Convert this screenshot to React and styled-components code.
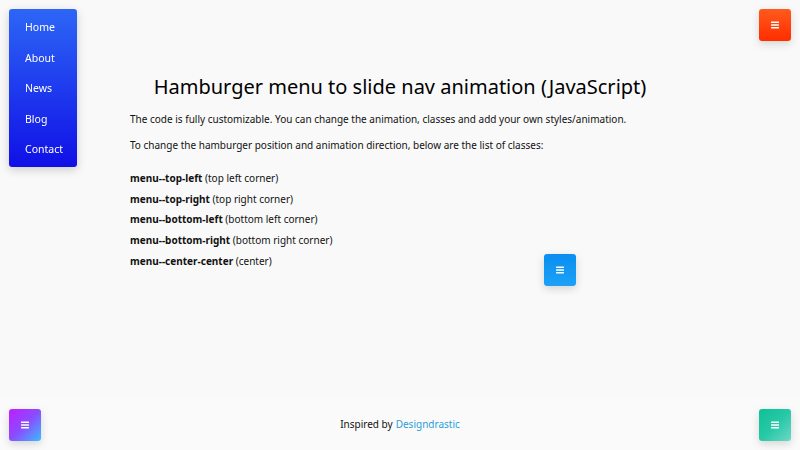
import React from "react"
import styled, { createGlobalStyle, css } from "styled-components"

const GlobalStyle = createGlobalStyle`
  html, body {
    margin: 0;
    padding: 0;
    background: #f9f9f9;
    font-family: "Noto Sans", "Open Sans", sans-serif;
    color: #111;
  }
  * { box-sizing: border-box; }
`

const Page = styled.div`
  min-height: 100vh;
  display: flex;
  flex-direction: column;
`

const Main = styled.main`
  flex: 1;
  width: 540px;
  margin: 0 auto;
  padding-top: 72px;
`

const Title = styled.h1`
  margin: 0 0 9px;
  font-size: 20px;
  font-weight: 400;
  line-height: 30px;
  text-align: center;
  color: #000;
`

const Text = styled.p`
  margin: 0 0 10px;
  font-size: 10px;
  line-height: 16px;
`

const ClassList = styled.ul`
  list-style: none;
  margin: 15px 0 0;
  padding: 0;
  font-size: 10px;
  line-height: 20.7px;

  b {
    font-weight: 700;
  }
`

const Footer = styled.footer`
  height: 52px;
  display: flex;
  align-items: center;
  justify-content: center;
  font-size: 10px;
  background: #fafafa;

  a {
    color: #2a9fd8;
    text-decoration: none;
    margin-left: 3px;
  }
`

const NavPanel = styled.nav`
  position: fixed;
  top: 9px;
  left: 9px;
  width: 68px;
  height: 158px;
  border-radius: 3px;
  background: linear-gradient(180deg, #2d66f6 0%, #1010e6 100%);
  box-shadow: 0 3px 10px rgba(0, 0, 0, 0.18);
  display: flex;
  flex-direction: column;
  justify-content: space-between;
  padding: 9px 0 9px 16px;
`

const NavLink = styled.a`
  color: #fff;
  font-size: 10.5px;
  line-height: 18px;
  text-decoration: none;
`

const gradients = {
  orange: "linear-gradient(180deg, #ff5a1e 0%, #ff2d00 100%)",
  blue: "linear-gradient(180deg, #0b8ef0 0%, #1ba2f6 100%)",
  purple: "linear-gradient(135deg, #c21dff 0%, #8a4cff 50%, #3bbcff 100%)",
  teal: "linear-gradient(135deg, #0fc095 0%, #27c8a6 50%, #6cd9c6 100%)",
}

const positions = {
  topRight: css`top: 9px; right: 9px;`,
  center: css`top: 254px; left: 544px;`,
  bottomLeft: css`bottom: 9px; left: 9px;`,
  bottomRight: css`bottom: 9px; right: 9px;`,
}

const Burger = styled.button`
  position: fixed;
  ${(p) => positions[p.$at]}
  width: 32px;
  height: 32px;
  border: 0;
  border-radius: 3px;
  background: ${(p) => gradients[p.$tone]};
  box-shadow: 0 3px 8px rgba(0, 0, 0, 0.15);
  color: #fff;
  display: flex;
  align-items: center;
  justify-content: center;
  padding: 0;
  cursor: pointer;
`

function BurgerIcon() {
  return (
    <svg width="8" height="8" viewBox="0 0 8 8">
      <rect x="0" y="0.5" width="8" height="1.4" rx="0.5" fill="#fff" />
      <rect x="0" y="3.3" width="8" height="1.4" rx="0.5" fill="#fff" />
      <rect x="0" y="6.1" width="8" height="1.4" rx="0.5" fill="#fff" />
    </svg>
  )
}

const classes = [
  ["menu--top-left", "top left corner"],
  ["menu--top-right", "top right corner"],
  ["menu--bottom-left", "bottom left corner"],
  ["menu--bottom-right", "bottom right corner"],
  ["menu--center-center", "center"],
]

const navItems = ["Home", "About", "News", "Blog", "Contact"]

export default function App() {
  return (
    <Page>
      <GlobalStyle />
      <Main>
        <Title>Hamburger menu to slide nav animation (JavaScript)</Title>
        <Text>
          The code is fully customizable. You can change the animation, classes
          and add your own styles/animation.
        </Text>
        <Text>
          To change the hamburger position and animation direction, below are
          the list of classes:
        </Text>
        <ClassList>
          {classes.map(([name, desc]) => (
            <li key={name}>
              <b>{name}</b> ({desc})
            </li>
          ))}
        </ClassList>
      </Main>
      <Footer>
        Inspired by<a href="#">Designdrastic</a>
      </Footer>

      <NavPanel>
        {navItems.map((item) => (
          <NavLink key={item} href="#">
            {item}
          </NavLink>
        ))}
      </NavPanel>
      <Burger $at="topRight" $tone="orange"><BurgerIcon /></Burger>
      <Burger $at="center" $tone="blue"><BurgerIcon /></Burger>
      <Burger $at="bottomLeft" $tone="purple"><BurgerIcon /></Burger>
      <Burger $at="bottomRight" $tone="teal"><BurgerIcon /></Burger>
    </Page>
  )
}
